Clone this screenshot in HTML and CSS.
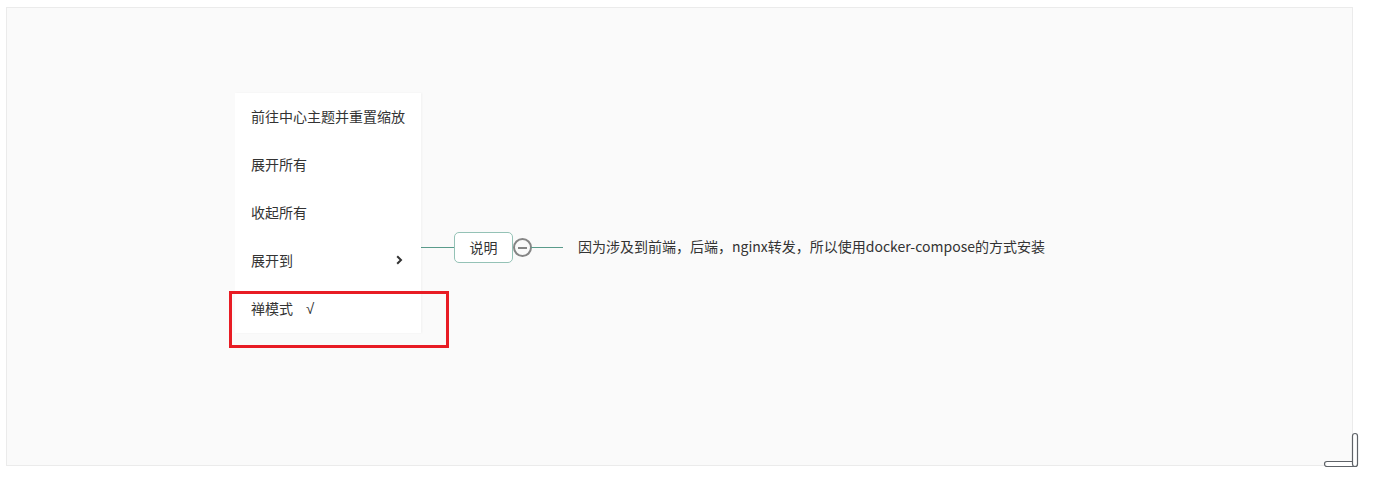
FILE: index.html
```html
<!DOCTYPE html>
<html lang="zh-CN">
<head>
    <meta charset="UTF-8">
    <meta name="viewport" content="width=device-width, initial-scale=1.0">
    <title>思维导图</title>
    <link rel="stylesheet" href="styles.css">
</head>
<body>
    <div class="canvas">
        <!-- 导图节点 -->
        <div class="edge edge-root"></div>
        <div class="node">说明</div>
        <div class="toggle"><span class="minus"></span></div>
        <div class="edge edge-child"></div>
        <div class="leaf">因为涉及到前端，后端，nginx转发，所以使用docker-compose的方式安装</div>

        <!-- 右键菜单 -->
        <ul class="context-menu">
            <li class="menu-item">前往中心主题并重置缩放</li>
            <li class="menu-item">展开所有</li>
            <li class="menu-item">收起所有</li>
            <li class="menu-item has-sub">
                <span>展开到</span>
                <svg class="chevron" width="7" height="10" viewBox="0 0 7 10">
                    <path d="M1.2 1.2 L5 5 L1.2 8.8" fill="none" stroke="#333" stroke-width="2"/>
                </svg>
            </li>
            <li class="menu-item">禅模式<span class="check">√</span></li>
        </ul>

        <div class="highlight"></div>

        <svg class="resize-handle" width="38" height="38" viewBox="0 0 38 38">
            <rect x="1.5" y="29.5" width="33" height="5" rx="2.5" fill="#fff" stroke="#5f6368" stroke-width="1.2"/>
            <rect x="29.5" y="1.5" width="5" height="33" rx="2.5" fill="#fff" stroke="#5f6368" stroke-width="1.2"/>
        </svg>
    </div>
</body>
</html>
```

FILE: styles.css
```css
:root {
    --line-color: #5a9b8b;
    --node-border: #94c2b6;
    --text-color: #333;
}

body {
    margin: 0;
    padding: 7px 6px;
    background-color: #fff;
    font-family: 'Noto Sans CJK SC', 'Noto Sans', sans-serif;
    color: var(--text-color);
}

.canvas {
    position: relative;
    width: 1345px;
    height: 457px;
    background-color: #fafafa;
    border: 1px solid #ebebeb;
}

/* 节点与连线 */
.edge {
    position: absolute;
    height: 1px;
    background-color: var(--line-color);
    top: 239px;
}

.edge-root {
    left: 400px;
    width: 48px;
}

.edge-child {
    left: 524px;
    width: 32px;
}

.node {
    position: absolute;
    left: 447px;
    top: 224px;
    width: 59px;
    height: 31px;
    box-sizing: border-box;
    padding-bottom: 2px;
    border: 1px solid var(--node-border);
    border-radius: 5px;
    background-color: #fff;
    font-size: 14px;
    display: flex;
    align-items: center;
    justify-content: center;
}

.toggle {
    position: absolute;
    left: 506px;
    top: 230px;
    width: 19px;
    height: 19px;
    box-sizing: border-box;
    border: 2px solid #858585;
    border-radius: 50%;
    background-color: #fafafa;
    display: flex;
    align-items: center;
    justify-content: center;
}

.minus {
    width: 9px;
    height: 2px;
    background-color: #858585;
}

.leaf {
    position: absolute;
    left: 571px;
    top: 228px;
    line-height: 20px;
    font-size: 14px;
    white-space: nowrap;
}

/* 右键菜单 */
.context-menu {
    position: absolute;
    left: 228px;
    top: 85px;
    width: 186px;
    margin: 0;
    padding: 0;
    list-style: none;
    background-color: #fff;
    box-shadow: 1px 0 2px rgba(0, 0, 0, 0.04);
}

.menu-item {
    height: 48px;
    box-sizing: border-box;
    padding: 0 18px 3px 16px;
    display: flex;
    align-items: center;
    font-size: 14px;
    white-space: nowrap;
}

.has-sub {
    justify-content: space-between;
}

.check {
    margin-left: 13px;
    padding-top: 2px;
    font-family: 'Liberation Sans', sans-serif;
    font-size: 15px;
}

.highlight {
    position: absolute;
    left: 222px;
    top: 283px;
    width: 220px;
    height: 57px;
    box-sizing: border-box;
    border: 3px solid #e81c24;
}

.resize-handle {
    position: absolute;
    left: 1316px;
    top: 424px;
}
```
